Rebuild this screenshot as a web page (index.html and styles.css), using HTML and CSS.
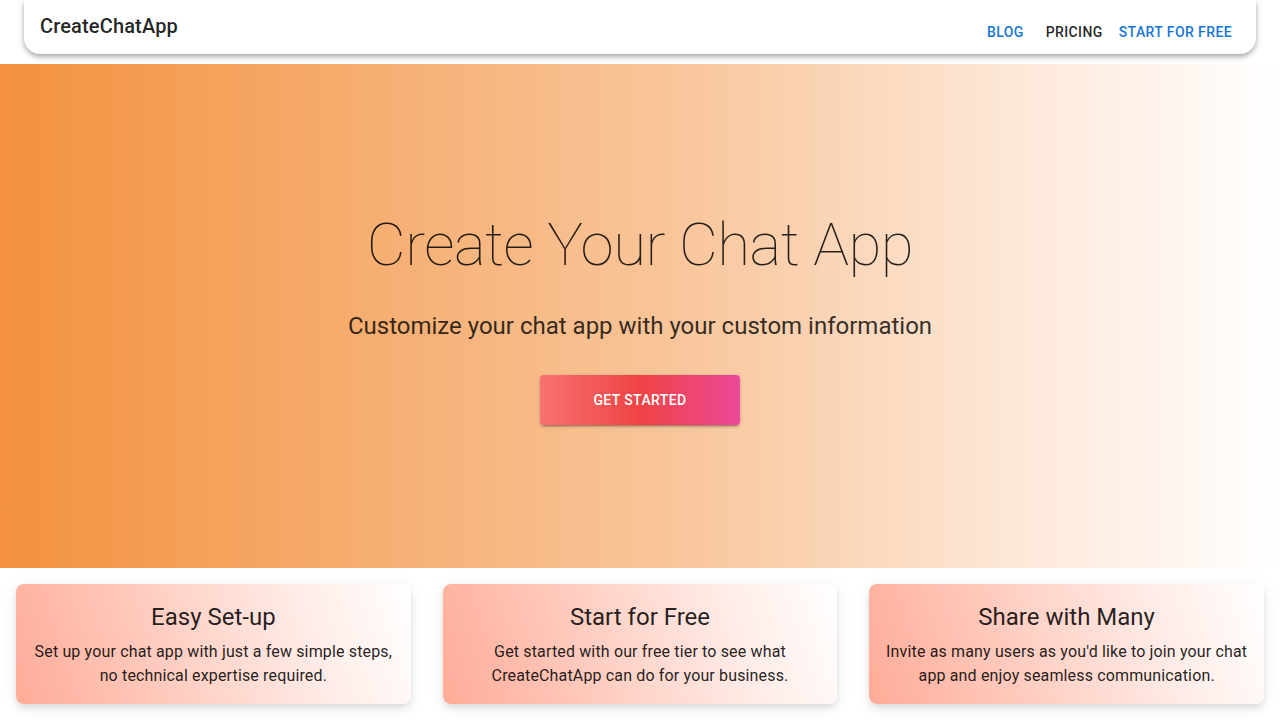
FILE: index.html
```html
<!DOCTYPE html>
<html lang="en">
<head>
<meta charset="utf-8">
<title>CreateChatApp</title>
<link rel="stylesheet" href="styles.css">
</head>
<body>
<header class="appbar">
  <div class="logo">CreateChatApp</div>
  <nav class="nav">
    <a class="nav-btn blue" href="#">Blog</a>
    <a class="nav-btn dark" href="#">Pricing</a>
    <a class="nav-btn blue" href="#">Start for Free</a>
  </nav>
</header>
<section class="hero">
  <h1 class="hero-title">Create Your Chat App</h1>
  <p class="hero-sub">Customize your chat app with your custom information</p>
  <a class="cta" href="#">Get Started</a>
</section>
<section class="cards">
  <div class="card">
    <h2 class="card-title">Easy Set-up</h2>
    <p class="card-text">Set up your chat app with just a few simple steps, no technical expertise required.</p>
  </div>
  <div class="card">
    <h2 class="card-title">Start for Free</h2>
    <p class="card-text">Get started with our free tier to see what CreateChatApp can do for your business.</p>
  </div>
  <div class="card">
    <h2 class="card-title">Share with Many</h2>
    <p class="card-text">Invite as many users as you'd like to join your chat app and enjoy seamless communication.</p>
  </div>
</section>
</body>
</html>
```
FILE: styles.css
```css
* { box-sizing: border-box; }
html, body { margin: 0; padding: 0; }
body {
  font-family: Roboto, "Liberation Sans", Arial, sans-serif;
  background: #fff;
  color: rgba(0,0,0,0.87);
}
.appbar {
  margin: 0 24px;
  height: 54px;
  background: #fff;
  border-radius: 0 0 16px 16px;
  box-shadow: 0 2px 4px -1px rgba(0,0,0,0.2), 0 4px 5px 0 rgba(0,0,0,0.14), 0 1px 10px 0 rgba(0,0,0,0.12);
  display: flex;
  align-items: center;
  justify-content: space-between;
  padding: 0 16px;
  position: relative;
  z-index: 2;
}
.logo {
  font-size: 20px;
  font-weight: 500;
  letter-spacing: 0.15px;
  color: rgba(0,0,0,0.87);
  margin-top: -2px;
}
.nav { display: flex; align-items: center; margin-top: 10px; margin-right: 0; }
.nav-btn {
  text-decoration: none;
  font-size: 14px;
  font-weight: 500;
  letter-spacing: 0.4px;
  text-transform: uppercase;
  padding: 6px 8px;
  line-height: 24px;
}
.nav-btn.blue { color: #1976d2; }
.nav-btn.dark { color: rgba(0,0,0,0.87); margin: 0 0 0 6px; }
.hero {
  margin-top: 10px;
  height: 504px;
  background: linear-gradient(to right, #f3913e 0%, #f9c89f 55%, #fde8d9 80%, #ffffff 100%);
  display: flex;
  flex-direction: column;
  align-items: center;
  justify-content: center;
  padding-top: 2px;
}
.hero-title {
  margin: 0;
  font-family: Roboto, "Liberation Sans", sans-serif;
  font-size: 60px;
  font-weight: 100;
  letter-spacing: -0.5px;
  line-height: 1.2;
  color: rgba(0,0,0,0.85);
}
.hero-sub {
  margin: 29px 0 0;
  font-size: 24px;
  font-weight: 400;
  line-height: 1.334;
  color: rgba(0,0,0,0.8);
}
.cta {
  margin-top: 32px;
  width: 200px;
  height: 50px;
  display: flex;
  align-items: center;
  justify-content: center;
  border-radius: 4px;
  background: linear-gradient(to right, #f87171 0%, #ef4444 50%, #ec4899 100%);
  color: #fff;
  text-decoration: none;
  font-size: 14px;
  font-weight: 500;
  letter-spacing: 0.4px;
  text-transform: uppercase;
  box-shadow: 0 3px 1px -2px rgba(0,0,0,0.2), 0 2px 2px 0 rgba(0,0,0,0.14), 0 1px 5px 0 rgba(0,0,0,0.12);
}
.cards {
  display: grid;
  grid-template-columns: repeat(3, 1fr);
  gap: 32px;
  padding: 16px;
}
.card {
  height: 120px;
  border-radius: 8px;
  background: linear-gradient(72deg, #ffab98 0%, #ffd3c8 45%, #ffe9e4 70%, #ffffff 100%);
  box-shadow: 0 3px 5px -1px rgba(0,0,0,0.08), 0 6px 10px 0 rgba(0,0,0,0.06), 0 1px 18px 0 rgba(0,0,0,0.06);
  padding: 17px 16px 0;
  text-align: center;
}
.card-title {
  margin: 0;
  font-size: 24px;
  font-weight: 400;
  line-height: 1.334;
  color: rgba(0,0,0,0.87);
}
.card-text {
  margin: 7px 0 0;
  font-size: 16px;
  line-height: 24px;
  letter-spacing: 0.15px;
  color: rgba(0,0,0,0.87);
}
```
